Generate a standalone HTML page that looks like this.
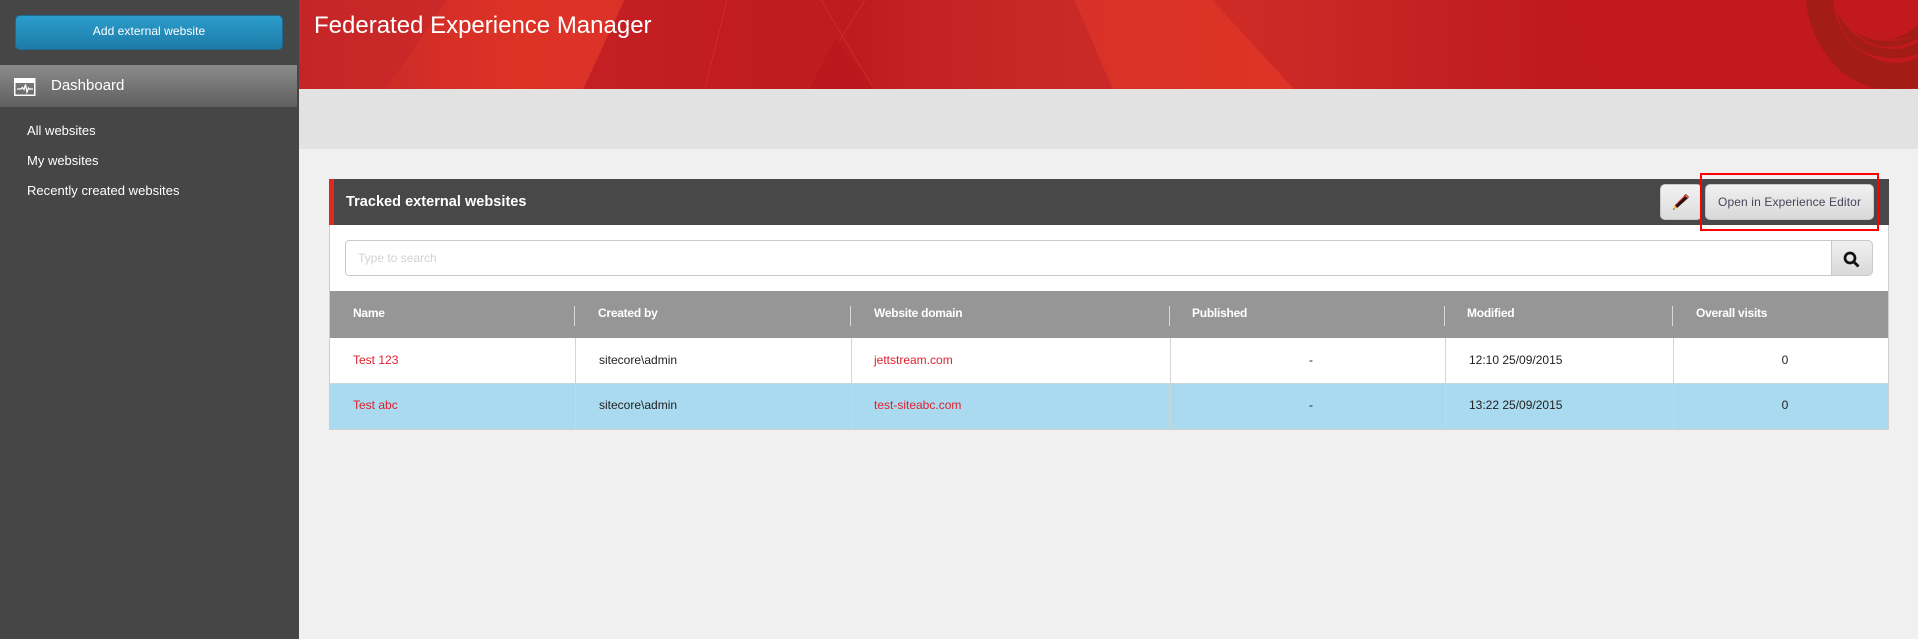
<!DOCTYPE html>
<html><head><meta charset="utf-8"><title>Federated Experience Manager</title>
<style>
html,body{margin:0;padding:0}
body{width:1918px;height:639px;position:relative;overflow:hidden;background:#f0f0f0;font-family:"Liberation Sans",sans-serif;font-size:12px;color:#222}
div,span{position:absolute;box-sizing:border-box}
.t{white-space:nowrap;line-height:16px;height:16px}
.h{color:#fff;top:305px;font-weight:bold;font-size:12px;letter-spacing:-.25px}
.r{color:#e01f2d}
.sep{width:1px;background:#d8d8d8;top:306px;height:20px}
.col{width:1px;background:#d4d4d4;top:338px;height:91px}
.nav{color:#fff;font-size:13px;left:27px}
</style></head><body>
<div style="left:0;top:0;width:299px;height:639px;background:#464646"></div>
<div style="left:15px;top:15px;width:268px;height:35px;border-radius:5px;background:linear-gradient(#2b9dcc,#1e7ba7);border:1px solid #1a6c93"></div>
<span class="t" style="left:15px;width:268px;top:23px;text-align:center;color:#fff;font-size:12px;letter-spacing:.05px">Add external website</span>
<div style="left:0;top:65px;width:297px;height:42px;background:linear-gradient(#8b8b8b,#5f5f5f)"></div>
<svg style="position:absolute;left:14px;top:78px" width="22" height="18" viewBox="0 0 22 18"><rect x=".75" y=".75" width="20" height="16.5" fill="none" stroke="#fff" stroke-width="1.5"/><rect x="1" y="1" width="20" height="4" fill="#fff"/><path d="M3 11H7L8.500 9.500L10 11.500L11.500 6.500L13 14L14.500 10L15.500 11H19" fill="none" stroke="#fff" stroke-width="1.3"/></svg>
<span class="t" style="left:51px;top:78px;color:#fff;font-size:15px">Dashboard</span>
<span class="t nav" style="top:123px">All websites</span>
<span class="t nav" style="top:153px">My websites</span>
<span class="t nav" style="top:183px;letter-spacing:.03px">Recently created websites</span>

<svg style="position:absolute;left:299px;top:0" width="1619" height="89" viewBox="299 0 1619 89">
<defs>
<linearGradient id="a" x1="0" x2="1" y1="0" y2="0"><stop offset="0" stop-color="#c62527"/><stop offset="1" stop-color="#cb2a29"/></linearGradient>
<linearGradient id="b" gradientUnits="userSpaceOnUse" x1="387" x2="624" y1="0" y2="0"><stop offset="0" stop-color="#cd2b28"/><stop offset=".25" stop-color="#d62f27"/><stop offset=".55" stop-color="#dd3226"/><stop offset="1" stop-color="#db3228"/></linearGradient>
<linearGradient id="c" gradientUnits="userSpaceOnUse" x1="590" x2="1075" y1="0" y2="0"><stop offset="0" stop-color="#c42024"/><stop offset=".3" stop-color="#c11c20"/><stop offset=".55" stop-color="#bf1b1f"/><stop offset=".7" stop-color="#c42225"/><stop offset="1" stop-color="#c92a28"/></linearGradient>
<linearGradient id="d" gradientUnits="userSpaceOnUse" x1="1075" x2="1300" y1="0" y2="0"><stop offset="0" stop-color="#d83127"/><stop offset="1" stop-color="#df3427"/></linearGradient>
<linearGradient id="e" gradientUnits="userSpaceOnUse" x1="1210" x2="1560" y1="0" y2="0"><stop offset="0" stop-color="#d02c26"/><stop offset=".5" stop-color="#c62325"/><stop offset="1" stop-color="#bf191e"/></linearGradient>
</defs>
<rect x="299" y="0" width="1619" height="89" fill="#c2191e"/>
<rect x="299" y="0" width="160" height="89" fill="url(#a)"/>
<polygon points="590,0 1100,0 1113,89 570,89" fill="url(#c)"/>
<polygon points="448,0 624,0 583,89 387,89" fill="url(#b)"/>
<polygon points="1210,0 1560,0 1600,89 1294,89" fill="url(#e)"/>
<polygon points="1075,0 1212,0 1294,89 1113,89" fill="url(#d)"/>
<g fill="none" stroke="#d9342c" stroke-width="1" opacity=".55">
<path d="M727 0L705 89M821 0L874 89M865 0L809 89M624 0L583 89M448 0L387 89"/>
<path d="M1075 0L1113 89"/>
</g>
<polygon points="809,89 836,38 874,89" fill="#bb171c"/>
<path d="M1806 0C1808 22 1817 45 1833 63C1848 80 1868 89 1890 89C1900 89 1910 89 1918 87V58C1908 62 1902 63 1897 63C1880 63 1862 54 1851 43C1840 30 1834 15 1833 0Z" fill="#a31c15"/>
<path d="M1837 13C1840 26 1846 36 1853 44C1864 54 1880 58 1895 58C1904 58 1912 56 1918 54V42C1910 47 1902 49 1895 49C1882 49 1870 46 1862 40C1851 32 1844 24 1837 13Z" fill="#a31c15"/>
<path d="M1855 32C1862 39 1872 44 1880 46C1892 48 1906 46 1918 38V33C1910 38 1900 41 1890 41C1878 41 1866 39 1855 32Z" fill="#a31c15"/>
<path d="M1887 39C1896 39 1908 34 1918 25V34C1908 38 1896 40 1887 39Z" fill="#a31c15"/>
</svg>
<span class="t" style="left:314px;top:12px;color:#fff;font-size:24px;line-height:28px;height:28px">Federated Experience Manager</span>
<div style="left:299px;top:89px;width:1619px;height:60px;background:#e2e2e2"></div>

<div style="left:329px;top:179px;width:1560px;height:251px;background:#fff;border:1px solid #cfcfcf;border-top:0"></div>
<div style="left:329px;top:179px;width:1560px;height:46px;background:#484848"></div>
<div style="left:329px;top:179px;width:5px;height:46px;background:#e0281f"></div>
<span class="t" style="left:346px;top:194px;color:#fff;font-weight:bold;font-size:14.500px;letter-spacing:.03px">Tracked external websites</span>

<div style="left:1660px;top:184px;width:42px;height:36px;border-radius:5px;background:linear-gradient(#f2f2f2,#dcdcdc);border:1px solid #c8c8c8"></div>
<svg style="position:absolute;left:1671px;top:194px" width="20" height="18" viewBox="0 0 20 18"><path d="M6 14L3.500 11.500L13.500 1.500L16.500 4.500Z" fill="#d1261c"/><path d="M6 14L5 11L14.500 2.500L16.500 4.500Z" fill="#1f1210"/><path d="M13.500 1.500L15 .5L17.500 3L16.500 4.500Z" fill="#e8928a" stroke="#8c1a14" stroke-width=".7"/><path d="M3.500 11.500L6 14L2 16Z" fill="#f1c24a"/><path d="M2 16L2.800 14.300L3.700 15.100Z" fill="#222"/></svg>
<div style="left:1705px;top:184px;width:169px;height:36px;border-radius:5px;background:linear-gradient(#f0f0f0,#d9d9d9);border:1px solid #c8c8c8"></div>
<span class="t" style="left:1718px;top:194px;color:#46465a;font-size:12px;letter-spacing:.12px">Open in Experience Editor</span>
<div style="left:1700px;top:173px;width:179px;height:58px;border:2px solid #f00"></div>

<div style="left:345px;top:240px;width:1487px;height:36px;background:#fff;border:1px solid #c9c9c9;border-radius:4px 0 0 4px"></div>
<span class="t" style="left:358px;top:250px;color:#d2d2d2;font-size:12px">Type to search</span>
<div style="left:1831px;top:240px;width:42px;height:36px;background:linear-gradient(#f0f0f0,#d9d9d9);border:1px solid #c9c9c9;border-radius:0 5px 5px 0"></div>
<svg style="position:absolute;left:1841px;top:248px" width="20" height="20" viewBox="0 0 20 20"><circle cx="9" cy="10" r="5" fill="none" stroke="#111" stroke-width="2.700"/><path d="M12.500 13.500L17.500 18.500" stroke="#111" stroke-width="2.800"/></svg>

<div style="left:330px;top:291px;width:1558px;height:47px;background:#969696"></div>
<div class="sep" style="left:574px"></div><div class="sep" style="left:850px"></div><div class="sep" style="left:1169px"></div><div class="sep" style="left:1444px"></div><div class="sep" style="left:1672px"></div>
<span class="t h" style="left:353px">Name</span>
<span class="t h" style="left:598px">Created by</span>
<span class="t h" style="left:874px">Website domain</span>
<span class="t h" style="left:1192px">Published</span>
<span class="t h" style="left:1467px">Modified</span>
<span class="t h" style="left:1696px">Overall visits</span>

<div style="left:330px;top:383px;width:1558px;height:46px;background:#aadaef;border-top:1px solid #c9d6dc"></div>
<div class="col" style="left:575px"></div><div class="col" style="left:851px"></div><div class="col" style="left:1170px"></div><div class="col" style="left:1445px"></div><div class="col" style="left:1673px"></div>

<span class="t r" style="left:353px;top:352px">Test 123</span>
<span class="t" style="left:599px;top:352px">sitecore\admin</span>
<span class="t r" style="left:874px;top:352px">jettstream.com</span>
<span class="t" style="left:1271px;width:80px;text-align:center;top:352px">-</span>
<span class="t" style="left:1469px;top:352px">12:10 25/09/2015</span>
<span class="t" style="left:1745px;width:80px;text-align:center;top:352px">0</span>

<span class="t r" style="left:353px;top:397px">Test abc</span>
<span class="t" style="left:599px;top:397px">sitecore\admin</span>
<span class="t r" style="left:874px;top:397px">test-siteabc.com</span>
<span class="t" style="left:1271px;width:80px;text-align:center;top:397px">-</span>
<span class="t" style="left:1469px;top:397px">13:22 25/09/2015</span>
<span class="t" style="left:1745px;width:80px;text-align:center;top:397px">0</span>
</body></html>
